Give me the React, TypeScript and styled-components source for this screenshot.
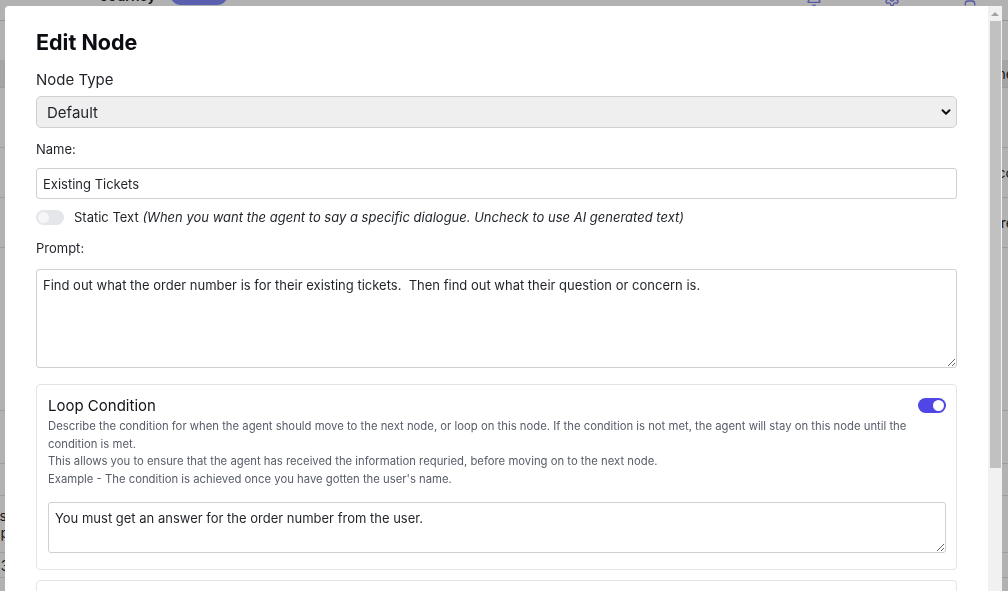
import React, { useState } from "react";
import styled, { createGlobalStyle } from "styled-components";
import { ChevronDown, Bell, Settings, User } from "lucide-react";

const GlobalStyle = createGlobalStyle`
  html, body {
    margin: 0;
    padding: 0;
    height: 100%;
    overflow: hidden;
    font-family: Inter, "Noto Sans", sans-serif;
    color: #1f2328;
  }
  * { box-sizing: border-box; }
`;

/* ---------- page behind the dialog ---------- */

const Page = styled.div`
  height: 100vh;
  background: #ffffff;
  display: flex;
  flex-direction: column;
`;

const NavBar = styled.div`
  height: 21px;
  border-bottom: 1px solid #d9d9d9;
  display: flex;
  align-items: flex-end;
  padding: 0 30px 0 100px;
  gap: 14px;
`;

const NavTitle = styled.span`
  font-size: 14px;
  font-weight: 600;
  margin-bottom: 16px;
`;

const NavPill = styled.span`
  width: 58px;
  height: 22px;
  border-radius: 11px;
  background: #8388fb;
  margin-bottom: 15px;
`;

const NavIcons = styled.div`
  margin-left: auto;
  display: flex;
  gap: 62px;
  color: #7a7fe8;
  margin-bottom: 13px;
`;

const PageBody = styled.div`
  flex: 1;
  display: flex;
  flex-direction: column;
  padding-top: 39px;
`;

const PageRow = styled.div<{ $h: number; $shade?: boolean }>`
  height: ${(p) => p.$h}px;
  border-bottom: 1px solid #e2e2e2;
  background: ${(p) => (p.$shade ? "#ececec" : "transparent")};
  display: flex;
  justify-content: space-between;
  align-items: center;
  font-size: 14px;
`;

const RowLeft = styled.span`
  margin-left: -8px;
`;

const RowRight = styled.span`
  margin-right: -6px;
`;

/* ---------- dialog ---------- */

const Backdrop = styled.div`
  position: fixed;
  inset: 0;
  background: rgba(0, 0, 0, 0.3);
`;

const Modal = styled.div`
  position: fixed;
  left: 5px;
  top: 6px;
  width: 997px;
  height: 600px;
  background: #ffffff;
  border-radius: 4px 0 0 0;
  display: flex;
  overflow: hidden;
`;

const Scroller = styled.div`
  flex: 1;
  overflow: hidden;
`;

const ScrollTrack = styled.div`
  width: 14px;
  background: #f1f1f1;
  display: flex;
  flex-direction: column;
  align-items: center;
  flex-shrink: 0;
`;

const ScrollArrow = styled.div`
  height: 15px;
  display: flex;
  align-items: center;
  justify-content: center;

  &::before {
    content: "";
    border-left: 4px solid transparent;
    border-right: 4px solid transparent;
    border-bottom: 4px solid #a3a3a3;
  }
`;

const ScrollThumb = styled.div<{ $len: number }>`
  width: 11px;
  height: ${(p) => p.$len}px;
  background: #c1c1c1;
`;

const Body = styled.div`
  padding: 23px 31px 30px 31px;
  display: flex;
  flex-direction: column;
`;

const Title = styled.h2`
  margin: 0;
  font-size: 21.5px;
  line-height: 26px;
  font-weight: 700;
  color: #0b0d12;
`;

const Label = styled.label<{ $size?: number; $top: number }>`
  display: block;
  font-size: ${(p) => p.$size ?? 13}px;
  line-height: ${(p) => ((p.$size ?? 13) > 14 ? 22 : 20)}px;
  margin-top: ${(p) => p.$top}px;
  color: #1f2328;
`;

const SelectWrap = styled.div`
  position: relative;
  margin-top: 5px;
`;

const Select = styled.select`
  appearance: none;
  width: 100%;
  height: 32px;
  background: #efefef;
  border: 1px solid #cfcfd4;
  border-radius: 5px;
  font-family: inherit;
  font-size: 15px;
  color: #1f2328;
  padding: 0 12px 0 10px;
  outline: none;
`;

const SelectChevron = styled.span`
  position: absolute;
  right: 4px;
  top: 9px;
  pointer-events: none;
  display: flex;
  color: #111;
`;

const TextInput = styled.input`
  width: 100%;
  height: 31px;
  margin-top: 9px;
  border: 1px solid #cfcfd4;
  border-radius: 3px;
  font-family: inherit;
  font-size: 13px;
  color: #1f2328;
  padding: 0 6px;
  outline: none;
`;

const ToggleRow = styled.div`
  display: flex;
  align-items: center;
  gap: 10px;
  margin-top: 10px;
  font-size: 13px;
  line-height: 16px;
`;

const Switch = styled.button<{ $on: boolean }>`
  position: relative;
  width: 28px;
  height: 15px;
  border: none;
  padding: 0;
  border-radius: 8px;
  background: ${(p) => (p.$on ? "#4f46e5" : "#e5e6ea")};
  cursor: pointer;
  flex-shrink: 0;

  &::after {
    content: "";
    position: absolute;
    top: 2px;
    left: ${(p) => (p.$on ? "15px" : "2px")};
    width: 11px;
    height: 11px;
    border-radius: 50%;
    background: ${(p) => (p.$on ? "#ffffff" : "#f6f6f8")};
  }
`;

const Hint = styled.em`
  font-style: italic;
`;

const TextArea = styled.textarea<{ $height: number; $pad: number }>`
  display: block;
  width: 100%;
  height: ${(p) => p.$height}px;
  border: 1px solid #cfcfd4;
  border-radius: 3px;
  font-family: inherit;
  font-size: 13px;
  line-height: 18px;
  color: #1f2328;
  padding: ${(p) => p.$pad}px 6px;
  outline: none;
  resize: vertical;
`;

const PromptArea = styled(TextArea)`
  margin-top: 11px;
`;

const Card = styled.div<{ $top: number; $min?: number }>`
  border: 1px solid #e4e4e7;
  border-radius: 4px;
  padding: 10px 10px 16px 11px;
  margin-top: ${(p) => p.$top}px;
  min-height: ${(p) => p.$min ?? 0}px;
`;

const CardHead = styled.div`
  display: flex;
  justify-content: space-between;
  align-items: center;
  height: 20px;
`;

const CardTitle = styled.span`
  font-size: 15px;
  color: #111318;
`;

const Description = styled.p`
  margin: 3px 0 0;
  font-size: 11.3px;
  line-height: 17.7px;
  color: #575c68;
  padding-right: 20px;
`;

const CardArea = styled(TextArea)`
  margin-top: 13px;
`;

export default function App() {
  const [staticText, setStaticText] = useState(false);
  const [loop, setLoop] = useState(true);

  return (
    <>
      <GlobalStyle />
      <Page>
        <NavBar>
          <NavTitle>Journey</NavTitle>
          <NavPill />
          <NavIcons>
            <Bell size={16} />
            <Settings size={16} />
            <User size={16} />
          </NavIcons>
        </NavBar>
        <PageBody>
          <PageRow $h={28} $shade>
            <RowLeft />
            <RowRight>ne</RowRight>
          </PageRow>
          <PageRow $h={60}>
            <RowLeft />
            <RowRight />
          </PageRow>
          <PageRow $h={50}>
            <RowLeft />
            <RowRight>co</RowRight>
          </PageRow>
          <PageRow $h={50}>
            <RowLeft />
            <RowRight>re</RowRight>
          </PageRow>
          <PageRow $h={163}>
            <RowLeft />
            <RowRight />
          </PageRow>
          <PageRow $h={53}>
            <RowLeft />
            <RowRight />
          </PageRow>
          <PageRow $h={32}>
            <RowLeft />
            <RowRight />
          </PageRow>
          <PageRow $h={57}>
            <RowLeft>
              ss
              <br />
              op
            </RowLeft>
            <RowRight />
          </PageRow>
          <PageRow $h={25}>
            <RowLeft>33</RowLeft>
            <RowRight />
          </PageRow>
        </PageBody>
      </Page>

      <Backdrop />
      <Modal>
        <Scroller>
          <Body>
            <Title>Edit Node</Title>

            <Label $size={15} $top={14}>Node Type</Label>
            <SelectWrap>
              <Select defaultValue="default">
                <option value="default">Default</option>
                <option value="transfer">Transfer</option>
                <option value="end">End Call</option>
              </Select>
              <SelectChevron>
                <ChevronDown size={14} strokeWidth={3.4} />
              </SelectChevron>
            </SelectWrap>

            <Label $top={11}>Name:</Label>
            <TextInput defaultValue="Existing Tickets" />

            <ToggleRow>
              <Switch $on={staticText} onClick={() => setStaticText((v) => !v)} />
              <span>
                Static Text{" "}
                <Hint>
                  (When you want the agent to say a specific dialogue. Uncheck
                  to use AI generated text)
                </Hint>
              </span>
            </ToggleRow>

            <Label $top={13}>Prompt:</Label>
            <PromptArea
              $height={99}
              $pad={6}
              defaultValue={
                "Find out what the order number is for their existing tickets.  Then find out what their question or concern is."
              }
            />

            <Card $top={16}>
              <CardHead>
                <CardTitle>Loop Condition</CardTitle>
                <Switch $on={loop} onClick={() => setLoop((v) => !v)} />
              </CardHead>
              <Description>
                Describe the condition for when the agent should move to the
                next node, or loop on this node. If the condition is not met,
                the agent will stay on this node until the condition is met.
                <br />
                This allows you to ensure that the agent has received the
                information requried, before moving on to the next node.
                <br />
                Example - The condition is achieved once you have gotten the
                user's name.
              </Description>
              <CardArea
                $height={51}
                $pad={6}
                defaultValue="You must get an answer for the order number from the user."
              />
            </Card>

            <Card $top={10} $min={160}>
              <CardHead>
                <CardTitle>Functions</CardTitle>
              </CardHead>
            </Card>
          </Body>
        </Scroller>
        <ScrollTrack>
          <ScrollArrow />
          <ScrollThumb $len={447} />
        </ScrollTrack>
      </Modal>
    </>
  );
}
